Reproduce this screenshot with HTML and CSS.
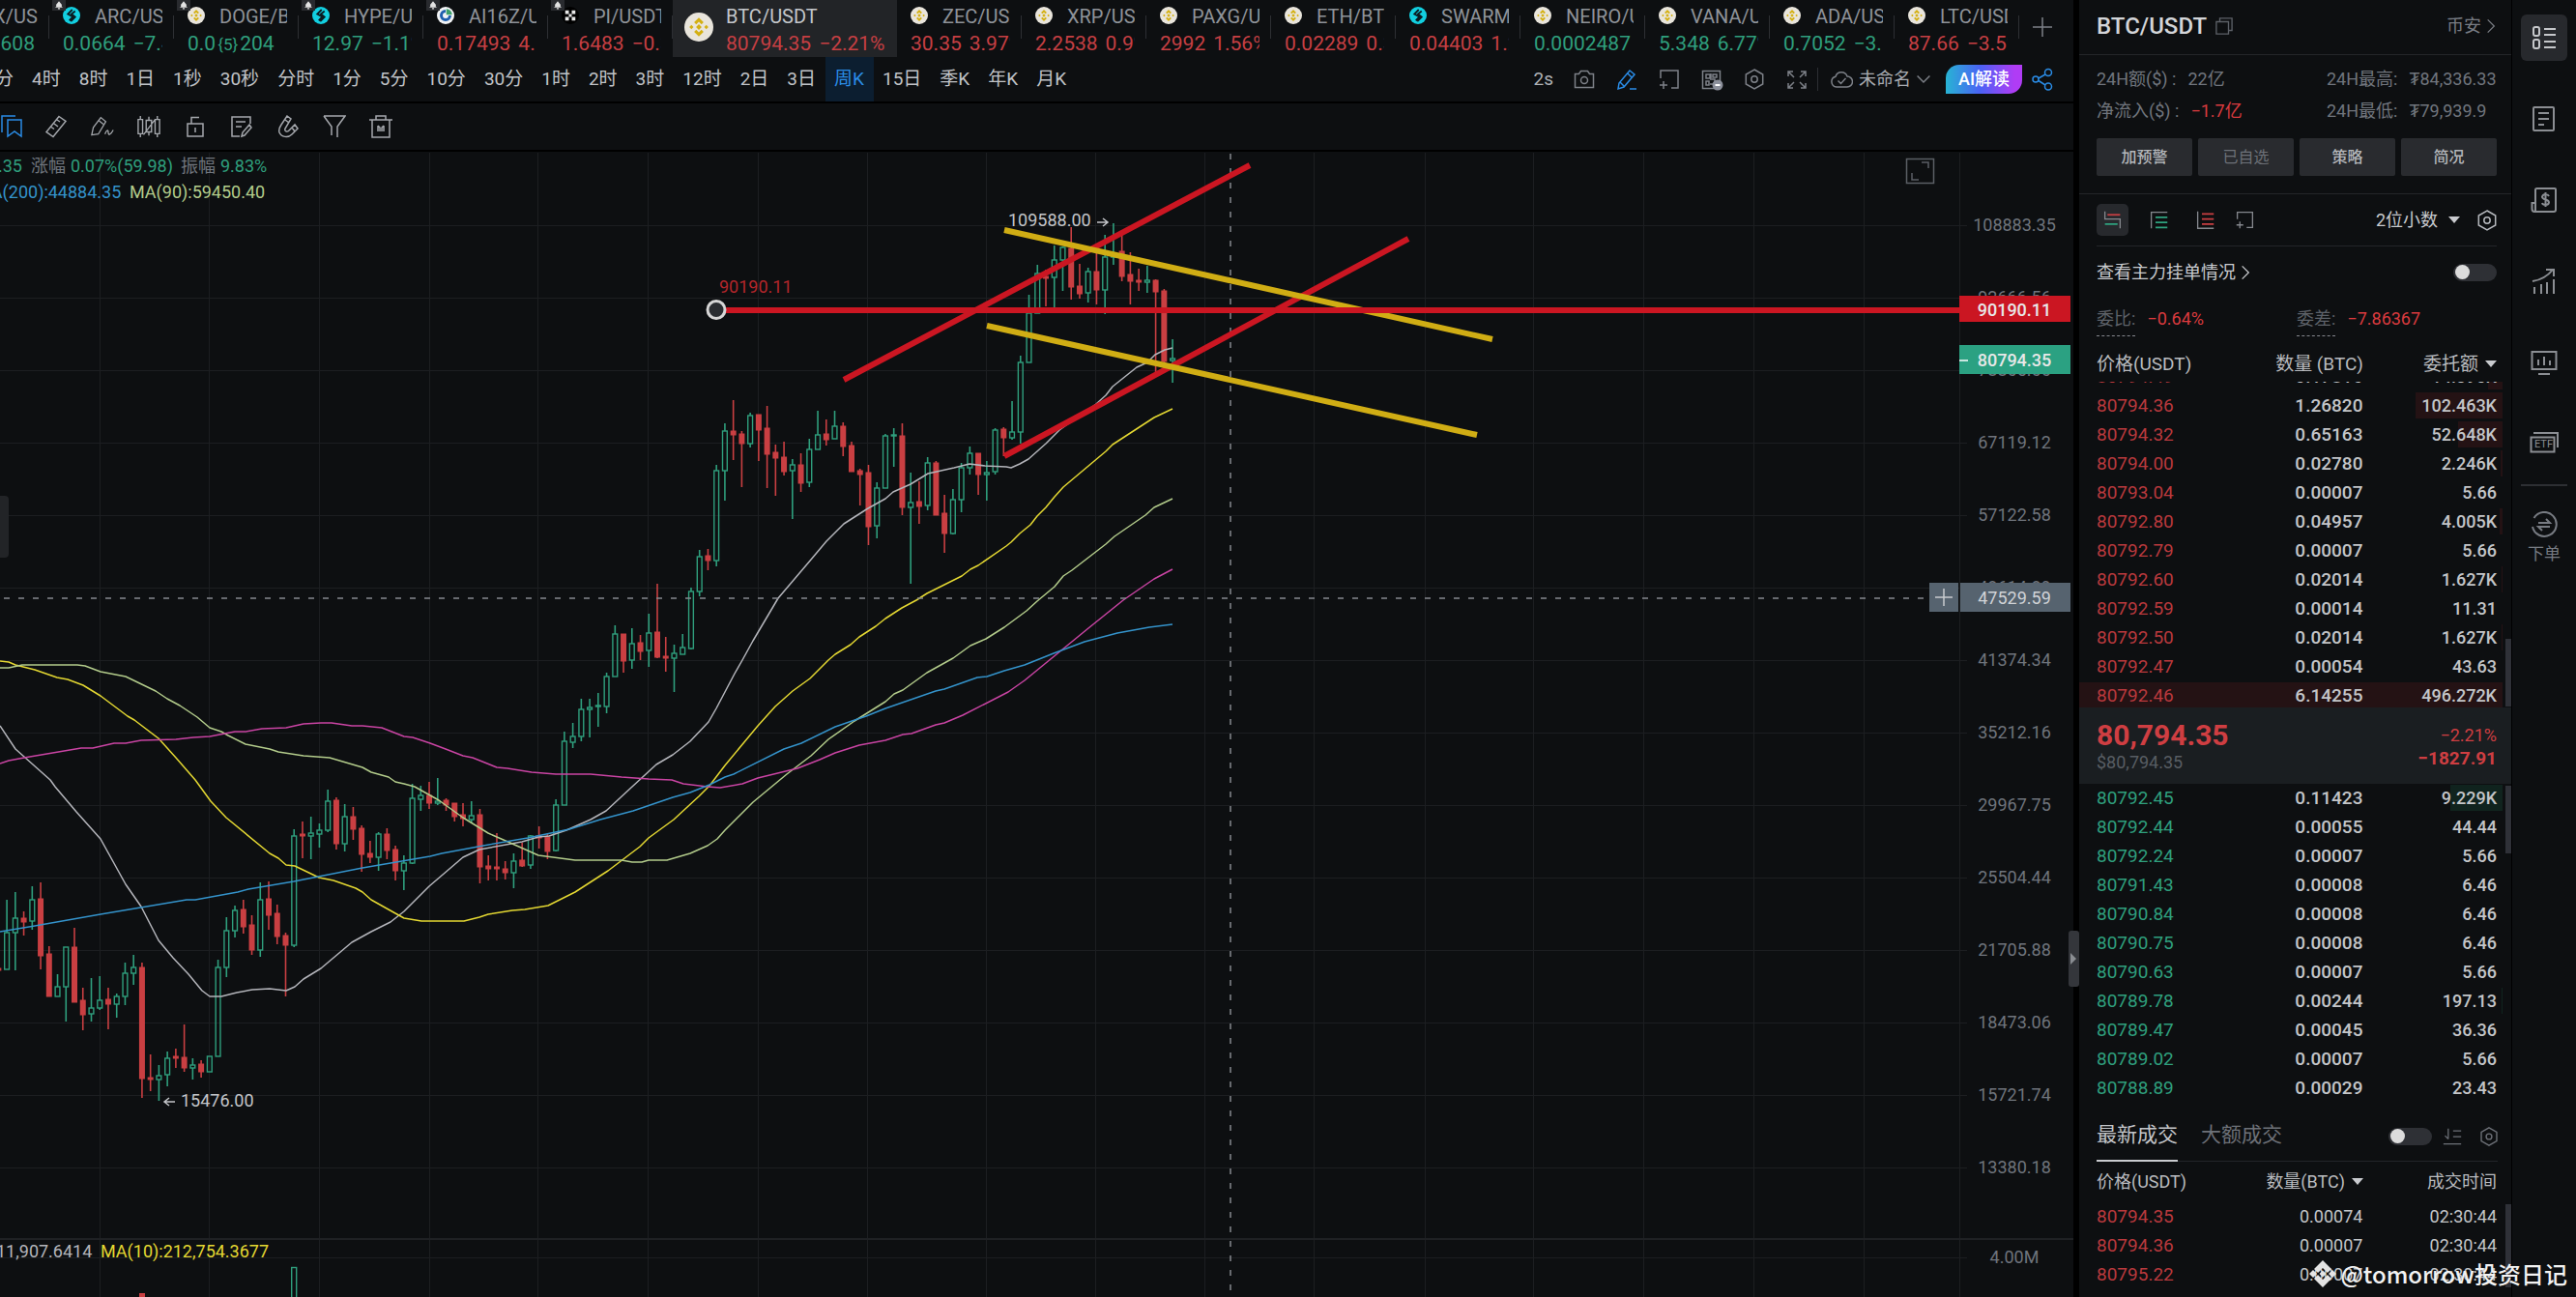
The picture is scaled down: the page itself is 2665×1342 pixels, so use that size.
FILE: index.html
```html
<!DOCTYPE html>
<html lang="zh-CN">
<head>
<meta charset="utf-8">
<title>BTC/USDT 周K</title>
<link rel="stylesheet" href="styles.css">
</head>
<body>
<svg class="sprite" aria-hidden="true">
  <defs>
    <symbol id="binance" viewBox="0 0 24 24"><circle cx="12" cy="12" r="12" fill="#e9e5dc"/><g transform="translate(3 3) scale(.75)" fill="#d4b012"><path d="M12 1.5l5.200 5.200-2.300 2.300L12 6.100 9.100 9 6.800 6.700zM12 22.500l-5.200-5.200 2.300-2.300L12 17.900l2.900-2.900 2.300 2.300zM1.500 12l2.300-2.300L6.100 12l-2.300 2.300zM17.900 12l2.300-2.300 2.300 2.300-2.300 2.300zM12 8.900l3.100 3.100-3.100 3.100L8.900 12z"/></g></symbol>
    <symbol id="bybit" viewBox="0 0 24 24"><circle cx="12" cy="12" r="12" fill="#12cfe0"/><path d="M13 4l-6 6 7 4-5 5M17 6l-5 4 5 4-6 6" fill="none" stroke="#0b1a20" stroke-width="2.400"/></symbol>
    <symbol id="gecko" viewBox="0 0 24 24"><circle cx="12" cy="12" r="12" fill="#f1f3f5"/><path d="M12 4a8 8 0 1 0 8 8h-4a4 4 0 1 1-4-4z" fill="#1d5fae"/><path d="M13 3v8h8a8 8 0 0 0-8-8z" fill="#3aa06a"/></symbol>
    <symbol id="okx" viewBox="0 0 24 24"><circle cx="12" cy="12" r="12" fill="#000"/><path d="M5 5h5v5H5zM14 5h5v5h-5zM10 10h4v4h-4zM5 14h5v5H5zM14 14h5v5h-5z" fill="#e8e8e8"/></symbol>
    <symbol id="bell" viewBox="0 0 14 12"><path d="M7 0l4 5v3l2 1H1l2-1V5zM5.500 10h3v1.500h-3z" fill="#e3e3e3"/></symbol>
    <symbol id="camera" viewBox="0 0 24 24"><path d="M2.500 6.500h4l2-3h7l2 3h4v14h-19z"/><circle cx="12" cy="13" r="3.500"/></symbol>
    <symbol id="pencil" viewBox="0 0 24 24"><path d="M3 22l1-6L15 3l5 4L9 20zM13 6l4 4M15 22h7M5 15l4 4"/></symbol>
    <symbol id="addbox" viewBox="0 0 24 24"><path d="M3 11V3h18v18h-7M2 18h8M6 14v8"/></symbol>
    <symbol id="qr" viewBox="0 0 24 24"><path d="M2.500 3.500h18v18h-18zM6 7h4v4H6zM13 7h4v3h-4zM12 12h3v3M6 14h3v4H6zM10 17h3M11 6v7"/><circle cx="18" cy="18" r="5.500" fill="#8b8f9a" stroke="none"/><path d="M15.500 18h5" stroke="#fff" stroke-width="2"/></symbol>
    <symbol id="hex" viewBox="0 0 24 24"><path d="M12 2l8.700 5v10L12 22l-8.700-5V7z"/><circle cx="12" cy="12" r="3.200"/></symbol>
    <symbol id="expand" viewBox="0 0 24 24"><path d="M3 9V4h5M3 4l6 6M16 4h5v5M21 4l-6 6M3 16v5h5M3 21l6-6M21 16v5h-5M21 21l-6-6"/></symbol>
    <symbol id="cloud" viewBox="0 0 24 24"><path d="M7 20a5.500 5.500 0 0 1-1-10.800A6.300 6.300 0 0 1 18 9a5.500 5.500 0 0 1 0 11zM8.500 13.500l3 3 5-5.500"/></symbol>
    <symbol id="chev-d" viewBox="0 0 24 24"><path d="M1 6l11 11L23 6" stroke-width="2.500"/></symbol>
    <symbol id="chev-r" viewBox="0 0 12 24"><path d="M2 4l8 8-8 8"/></symbol>
    <symbol id="share" viewBox="0 0 24 24"><circle cx="5" cy="12" r="3"/><circle cx="18" cy="5" r="3.500"/><circle cx="18" cy="19.500" r="3.500"/><path d="M8 11l7-4M8 13.500l7 4.500"/></symbol>
    <symbol id="marks" viewBox="0 0 24 24"><path d="M8 5h14v17l-7-5-7 5zM2 18V1h14"/></symbol>
    <symbol id="ruler" viewBox="0 0 24 24"><path d="M15 1.500l7 5L9 22.500l-7-5zM13 5l3 2M10 9l4 3M7 12.500l3 2"/></symbol>
    <symbol id="brush" viewBox="0 0 28 24"><path d="M1 22l2-9L12 1l6 5-9 15zM10 5l5 4M9 21l-8 1M17 21c2-5 4-6 4-2s3 3 6-3"/></symbol>
    <symbol id="candles" viewBox="0 0 26 24"><path d="M1 4h5v16H1zM10 5h6v13h-6zM20 4h5v16h-5zM3.500 0v4M3.500 20v4M13 1v4M13 18v4M22.500 0v4M22.500 20v4M7 21L20 4"/></symbol>
    <symbol id="lock" viewBox="0 0 24 24"><path d="M4 9h16v13H4zM8 9V2.500h8M12 13v5"/></symbol>
    <symbol id="note" viewBox="0 0 24 24"><path d="M10 22H2V2h19v7M6 7h10M6 12h6M12 22l1-4 7-8 2 3-7 8z"/></symbol>
    <symbol id="magnet" viewBox="0 0 24 24"><path d="M11 1l4 3-6 10c-1 3 2 4 4 2l6-6 3 4-6 6c-4 4-11 3-13-2-1-3 0-5 2-8zM9 5l4 3M16 13l3 4"/></symbol>
    <symbol id="funnel" viewBox="0 0 24 24"><path d="M1 1h22l-8 11v11M1 1l8 11v9"/></symbol>
    <symbol id="trash" viewBox="0 0 24 24"><path d="M0 5h24M7 5V1h10v4M3 5v18h18V5M9 11l2 2v4M15 11l-2 2v4M9 17v-6M15 17v-6"/></symbol>
    <symbol id="copy" viewBox="0 0 20 20"><path d="M1 5h14v14H1zM5 5V1h14v14h-4"/></symbol>
    <symbol id="both" viewBox="0 0 24 24"><path d="M3 2v9h18v11"/><path d="M6 6h15" stroke="#c93f42" stroke-width="2"/><path d="M3 17h15" stroke="#2fa27f" stroke-width="2"/></symbol>
    <symbol id="bids" viewBox="0 0 24 24"><path d="M3 22V3h19"/><path d="M8 9h14M8 15h14M8 21h14" stroke="#2fa27f" stroke-width="2"/></symbol>
    <symbol id="asks" viewBox="0 0 24 24"><path d="M3 2v20h19"/><path d="M8 5h14M8 11h14M8 17h14" stroke="#c93f42" stroke-width="2"/></symbol>
    <symbol id="sort" viewBox="0 0 24 24"><path d="M7 2v13M3 11l4 4M13 5h10M13 12h10M1 21h22"/></symbol>
    <symbol id="r-list" viewBox="0 0 28 28"><rect x="3" y="3" width="6" height="9" rx="2"/><rect x="3" y="16" width="6" height="9" rx="2"/><path d="M14 5h12M14 11h12M14 18h12M14 24h12"/></symbol>
    <symbol id="r-doc" viewBox="0 0 28 28"><rect x="3" y="2" width="21" height="24" rx="1"/><path d="M8 8h11M8 14h11M8 20h6"/></symbol>
    <symbol id="r-money" viewBox="0 0 28 28"><path d="M5 25V3.500Q5 2 6.500 2H25q1 0 1 1v21q0 2-2 2H4q-2.500 0-2.500-3v-6H5M19 10q-1-2-3.500-2T12 10.500q0 2 3.500 3t3.500 3Q18.500 19 15.500 19T12 17M15.500 6v15"/></symbol>
    <symbol id="r-trend" viewBox="0 0 28 28"><path d="M2 14Q15 12 23 2M16 2h8v7M4 20v7M11 17v10M17 15v12M24 12v15"/></symbol>
    <symbol id="r-screen" viewBox="0 0 28 28"><path d="M1.500 3h25v18h-25zM8 26h12M8 11v6M14 8v9M20 12v5"/></symbol>
    <symbol id="r-etf" viewBox="0 0 30 28"><path d="M1.500 7.500h24v15h-24zM4 3h25v15"/></symbol>
    <symbol id="r-swap" viewBox="0 0 28 28"><path d="M3.500 7A12.500 12.500 0 1 1 2 16M8 12h12l-4-4M20 16H8l4 4"/></symbol>
  </defs>
</svg>

<div class="app">
  <main class="main">
    <div class="tabs">
      <nav class="tab-list" id="tabs" aria-label="自选"></nav>
      <button class="icon-btn add-tab" aria-label="添加"><svg viewBox="0 0 24 24"><path d="M12 2v20M2 12h20"/></svg></button>
    </div>

    <div class="bar periods">
      <nav class="period-list">
        <button>分</button><button>4时</button><button>8时</button><button>1日</button><button>1秒</button><button>30秒</button><button>分时</button><button>1分</button><button>5分</button><button>10分</button><button>30分</button><button>1时</button><button>2时</button><button>3时</button><button>12时</button><button>2日</button><button>3日</button><button class="on">周K</button><button>15日</button><button>季K</button><button>年K</button><button>月K</button>
      </nav>
      <div class="tools">
        <span class="refresh">2s</span>
        <button class="icon-btn" aria-label="截图"><svg><use href="#camera"/></svg></button>
        <button class="icon-btn blue" aria-label="画线"><svg><use href="#pencil"/></svg></button>
        <button class="icon-btn" aria-label="添加窗口"><svg><use href="#addbox"/></svg></button>
        <button class="icon-btn" aria-label="二维码"><svg><use href="#qr"/></svg></button>
        <button class="icon-btn" aria-label="设置"><svg><use href="#hex"/></svg></button>
        <button class="icon-btn" aria-label="全屏"><svg><use href="#expand"/></svg></button>
      </div>
      <button class="layout-btn"><svg class="i24"><use href="#cloud"/></svg>未命名<svg class="i14"><use href="#chev-d"/></svg></button>
      <button class="ai">AI解读</button>
      <button class="icon-btn blue" aria-label="分享"><svg><use href="#share"/></svg></button>
    </div>

    <div class="bar draw">
      <button class="icon-btn blue" aria-label="收藏"><svg><use href="#marks"/></svg></button>
      <button class="icon-btn" aria-label="尺子"><svg><use href="#ruler"/></svg></button>
      <button class="icon-btn" aria-label="画笔"><svg><use href="#brush"/></svg></button>
      <button class="icon-btn" aria-label="形态"><svg><use href="#candles"/></svg></button>
      <button class="icon-btn" aria-label="锁定"><svg><use href="#lock"/></svg></button>
      <button class="icon-btn" aria-label="备注"><svg><use href="#note"/></svg></button>
      <button class="icon-btn" aria-label="磁吸"><svg><use href="#magnet"/></svg></button>
      <button class="icon-btn" aria-label="筛选"><svg><use href="#funnel"/></svg></button>
      <button class="icon-btn" aria-label="删除"><svg><use href="#trash"/></svg></button>
    </div>

    <div class="plot">
      <svg id="chart" class="chart" viewBox="0 157 2145 1185" preserveAspectRatio="xMaxYMin slice" role="img" aria-label="BTC/USDT 周K线图"></svg>
      <button class="handle-left" aria-label="展开"></button>
      <button class="handle-right" aria-label="收起"></button>
    </div>
  </main>

  <aside class="panel">
    <header class="head">
      <h1>BTC/USDT</h1><svg class="i18"><use href="#copy"/></svg>
      <a href="#exchange" class="exchange">币安<svg class="chev"><use href="#chev-r"/></svg></a>
    </header>

    <section class="stats">
      <dl>
        <div><dt>24H额($)&nbsp;:</dt><dd>22亿</dd></div>
        <div><dt>24H最高:</dt><dd>₮84,336.33</dd></div>
        <div><dt>净流入($)&nbsp;:</dt><dd class="hot">−1.7亿</dd></div>
        <div><dt>24H最低:</dt><dd>₮79,939.9</dd></div>
      </dl>
      <div class="actions"><button>加预警</button><button class="dim">已自选</button><button>策略</button><button>简况</button></div>
    </section>

    <section class="book">
      <div class="book-tools">
        <button class="mode on" aria-label="买卖盘"><svg><use href="#both"/></svg></button>
        <button class="mode" aria-label="买盘"><svg><use href="#bids"/></svg></button>
        <button class="mode" aria-label="卖盘"><svg><use href="#asks"/></svg></button>
        <button class="mode last" aria-label="添加"><svg><use href="#addbox"/></svg></button>
        <label class="digits"><select aria-label="小数位"><option>2位小数</option></select></label>
        <button class="mode gear" aria-label="设置"><svg><use href="#hex"/></svg></button>
      </div>
      <div class="whale">
        <a href="#whale">查看主力挂单情况<svg class="chev"><use href="#chev-r"/></svg></a>
        <input class="switch" type="checkbox" aria-label="主力挂单">
      </div>
      <dl class="ratio">
        <div><dt>委比:</dt><dd>−0.64%</dd></div>
        <div><dt>委差:</dt><dd>−7.86367</dd></div>
      </dl>
      <div class="cols big"><span>价格(USDT)</span><span>数量 (BTC)</span><button>委托额<i class="tri"></i></button></div>
      <div class="side ask-side"><table id="asks-table" class="orders ask" aria-label="卖盘"></table><i class="thumb"></i></div>
      <div class="last-price">
        <div><strong>80,794.35</strong><small>$80,794.35</small></div>
        <div class="chg"><span>−2.21%</span><b>−1827.91</b></div>
      </div>
      <div class="side bid-side"><table id="bids-table" class="orders bid" aria-label="买盘"></table><i class="thumb"></i></div>
    </section>

    <section class="trades">
      <div class="trade-tabs">
        <button class="on">最新成交</button><button>大额成交</button>
        <input class="switch" type="checkbox" aria-label="成交提醒">
        <svg class="i20"><use href="#sort"/></svg><svg class="i22"><use href="#hex"/></svg>
      </div>
      <div class="cols"><span>价格(USDT)</span><button>数量(BTC)<i class="tri"></i></button><span>成交时间</span></div>
      <div class="side trade-side"><table id="trades-table" class="orders ask small" aria-label="最新成交"></table><i class="thumb"></i></div>
    </section>
  </aside>

  <nav class="rail" aria-label="侧栏">
    <button class="on" aria-label="行情"><svg><use href="#r-list"/></svg></button>
    <button aria-label="资讯"><svg><use href="#r-doc"/></svg></button>
    <button aria-label="资金"><svg><use href="#r-money"/></svg></button>
    <button aria-label="趋势"><svg><use href="#r-trend"/></svg></button>
    <button aria-label="数据"><svg><use href="#r-screen"/></svg></button>
    <button class="etf"><svg><use href="#r-etf"/></svg><span>ETF</span></button>
    <hr>
    <button class="order"><svg><use href="#r-swap"/></svg>下单</button>
  </nav>

  <div class="credit"><svg viewBox="0 0 28 28"><path d="M14 0l9 9-4 4-5-5-5 5-4-4zM14 28l-9-9 4-4 5 5 5-5 4 4zM0 14l4-4 4 4-4 4zM20 14l4-4 4 4-4 4zM14 10.500l3.500 3.500-3.500 3.500-3.500-3.500z"/></svg>@tomorrow投资日记</div>
</div>
<script src="app.js"></script>
</body>
</html>
```
FILE: styles.css
```css
* { box-sizing: border-box; }
:root {
  --bg: #0d0f11;
  --line: #232529;
  --text: #c9cbcf;
  --muted: #70757d;
  --red: #c63f43;
  --green: #2f9f7d;
  --blue: #2a8ce6;
}
html, body { height: 100%; }
body {
  margin: 0;
  overflow: hidden;
  background: #000;
  color: var(--text);
  font: 18px/24px Roboto, "Noto Sans CJK SC", sans-serif;
}
button, select, input { font: inherit; color: inherit; margin: 0; }
button { padding: 0; border: 0; background: none; white-space: nowrap; }
a { color: inherit; text-decoration: none; }
dl, dd, h1 { margin: 0; }
svg { display: block; fill: none; stroke: currentColor; stroke-width: 1.5; }
.sprite { position: absolute; width: 0; height: 0; }
.i24 { width: 24px; height: 24px; }
.i22 { width: 22px; height: 22px; }
.i20 { width: 20px; height: 20px; }
.i18 { width: 18px; height: 18px; }
.i14 { width: 14px; height: 14px; }
.chev { width: 10px; height: 20px; }

.app {
  display: grid;
  grid-template-columns: minmax(0, 1fr) 453px 67px;
  height: 100vh;
  position: relative;
}
.main { display: flex; flex-direction: column; min-width: 0; background: var(--bg); }

/* symbol tabs */
.tabs { display: flex; height: 59px; overflow: hidden; }
.tab-list { display: flex; margin-left: -78px; }
.tab {
  position: relative;
  display: grid;
  grid-template-columns: 18px minmax(0, 1fr);
  column-gap: 15px;
  align-content: start;
  width: 129px;
  padding: 5px 12px 0 14px;
  text-align: left;
}
.tab::after { content: ""; position: absolute; right: 0; top: 16px; width: 1px; height: 24px; background: #2d2f33; }
.tab svg { stroke: none; }
.tab > svg { width: 18px; height: 18px; margin-top: 2px; }
.tab .bell { position: absolute; left: 3px; top: 0; width: 14px; height: 11px; margin: 0; padding: 0 2px; background: #292b2f; }
.name, .quote { display: block; overflow: hidden; white-space: nowrap; text-overflow: clip; }
.name { font-size: 20px; color: #8f9399; }
.quote { grid-column: 1 / -1; margin-top: 4px; font-size: 21px; color: var(--red); }
.quote.up { color: var(--green); }
.quote span { margin-left: 8px; }
.quote small { font-size: 17px; padding: 0 2px; }
.tab.current { grid-template-columns: 30px 1fr; column-gap: 13px; width: 232px; padding-left: 12px; padding-right: 0; background: #222427; }
.tab.current::after { display: none; }
.tab.current > svg { width: 30px; height: 30px; margin-top: 8px; grid-row: 1 / 3; }
.tab.current .quote { grid-column: 2; }
.tab.current .name { color: #c4c7cb; }
.add-tab { margin: 16px 0 0 12px; }

.icon-btn, .icon-btn svg { width: 24px; height: 24px; }
.icon-btn { color: #7d8188; flex: none; }
.blue { color: var(--blue); }

/* toolbars */
.bar { display: flex; align-items: center; border-bottom: 2px solid #000; }
.periods { height: 48px; padding-right: 20px; }
.period-list { display: flex; height: 46px; margin-left: -14px; }
.period-list button { padding: 0 10px 0 9px; font-size: 19px; color: #c0c3c7; }
.period-list .on { background: #0c1e30; color: var(--blue); }
.tools { display: flex; align-items: center; gap: 20px; margin-left: auto; padding-right: 9px; border-right: 1px solid #2d2f33; }
.refresh { font-size: 19px; color: #b0b3b8; }
.layout-btn { display: flex; align-items: center; gap: 6px; padding-left: 12px; color: #a9acb2; }
.layout-btn svg { color: #7d8188; }
.ai {
  width: 79px; height: 30px; margin: 0 9px 0 16px;
  border-radius: 14px 0 14px 0;
  background: linear-gradient(90deg, #27b4d4, #4b62f5 45%, #b03cf5 90%);
  color: #fff; font-weight: 500;
}
.draw { height: 50px; }
.draw .icon-btn { width: 48px; color: #a5a8ad; }
.draw .icon-btn svg { margin: 0 auto; }
.draw .icon-btn.blue { width: 34px; color: var(--blue); }
.draw .icon-btn.blue svg { margin: 0; }

/* chart */
.plot { position: relative; flex: 1; min-height: 0; }
.chart { width: 100%; height: 100%; stroke: none; }
.chart text { font-size: 18px; fill: #c3c5c9; }
.chart .axis { fill: #6f747c; text-anchor: middle; }
.chart .tag { text-anchor: middle; fill: #e8e8e8; font-weight: 500; }
.chart .cursor-tag { text-anchor: middle; fill: #d0d3d7; }
.handle-left { position: absolute; left: 0; top: 356px; width: 9px; height: 64px; border-radius: 0 4px 4px 0; background: #222427; }
.handle-right { position: absolute; right: -6px; top: 806px; width: 11px; height: 58px; border-radius: 3px; background: #34363b; z-index: 2; }
.handle-right::after { content: ""; position: absolute; left: 2px; top: 23px; border: 6px solid transparent; border-left-color: #8a8d92; border-right: 0; }

/* quote panel */
.panel { display: flex; flex-direction: column; min-height: 0; margin-left: 6px; background: var(--bg); }
.head { display: flex; align-items: center; gap: 9px; height: 57px; padding: 0 16px 2px 18px; border-bottom: 1px solid var(--line); color: #5c6067; }
.head h1 { font-size: 24px; font-weight: 500; color: #d3d5d8; }
.exchange { display: flex; align-items: center; gap: 5px; margin-left: auto; color: #787c83; }
.stats { padding: 13px 15px 18px 18px; border-bottom: 1px solid var(--line); color: var(--muted); }
.stats dl { display: grid; grid-template-columns: 238px 1fr; row-gap: 9px; }
.stats dl div { display: flex; gap: 12px; white-space: nowrap; }
.stats .hot { color: #d93a3e; }
.actions { display: grid; grid-template-columns: repeat(4, 1fr); gap: 6px; margin-top: 16px; }
.actions button { height: 39px; border-radius: 2px; background: #292b2f; font-size: 16px; font-weight: 500; color: #b4b7bb; }
.actions .dim { color: #6d7178; font-weight: 400; }

.book { display: flex; flex-direction: column; }
.book-tools { display: flex; align-items: center; height: 54px; margin: 0 15px 0 18px; border-bottom: 1px solid var(--line); }
.mode { display: grid; place-items: center; width: 33px; height: 33px; margin-right: 15px; border-radius: 5px; color: #85888e; }
.mode svg { width: 21px; height: 21px; }
.mode.on { background: #27292d; }
.mode.last { margin-left: -7px; margin-right: 0; }
.mode.gear { width: 22px; margin: 0 0 0 16px; color: #b5b8bd; }
.mode.gear svg { width: 24px; height: 24px; }
.digits { display: flex; align-items: center; gap: 10px; margin-left: auto; }
.digits select { appearance: none; border: 0; padding: 0; background: none; }
.digits::after, .tri { content: ""; display: inline-block; border: 6px solid transparent; border-top: 7px solid #c9cbcf; border-bottom: 0; }
.whale { display: flex; align-items: center; justify-content: space-between; height: 54px; padding: 0 15px 0 18px; }
.whale a { display: flex; align-items: center; gap: 5px; }
.switch { appearance: none; position: relative; width: 45px; height: 18px; border-radius: 9px; background: #2e3035; }
.switch::after { content: ""; position: absolute; left: 2px; top: 1px; width: 15px; height: 15px; border-radius: 50%; background: #dcdcdc; }
.ratio { display: grid; grid-template-columns: 207px 1fr; height: 49px; padding: 9px 15px 0 18px; }
.ratio div { display: flex; align-items: flex-start; gap: 12px; }
.ratio dt { color: #5d6168; padding-bottom: 5px; border-bottom: 1px dashed #85888e; }
.ratio dd { color: #d93a3e; }
.cols { display: grid; grid-template-columns: 150px 144px 138px; height: 42px; align-items: center; padding-right: 15px; color: #b9bbbf; }
.cols > :first-child { padding-left: 18px; white-space: nowrap; }
.cols > :nth-child(n+2) { text-align: right; }
.cols .tri { margin-left: 7px; vertical-align: 3px; }
.cols.big { height: 37px; font-size: 19px; }
.side { position: relative; overflow: hidden; }
.ask-side { display: flex; flex-direction: column; justify-content: flex-end; height: 337px; }
.ask-side table { margin-bottom: -3px; }
.thumb { position: absolute; right: 0; top: 2px; width: 6px; height: 70px; background: #2f3138; }
.ask-side .thumb { top: auto; bottom: 1px; }
.orders { width: 438px; flex: none; border-collapse: collapse; table-layout: fixed; font-weight: 500; font-size: 19px; color: #c3c5c8; }
.orders tr { position: relative; height: 30px; }
.orders td { position: relative; padding: 0; text-align: right; line-height: 30px; }
.orders td:nth-child(1) { width: 34%; padding-left: 18px; text-align: left; font-weight: 400; }
.orders td:nth-child(2) { width: 33%; }
.orders td:nth-child(3) { width: 33%; padding-right: 6px; font-size: 18px; }
.ask td:first-child { color: #b9393d; }
.bid td:first-child { color: var(--green); }
.depth { position: absolute; right: 0; top: 1px; height: 27px; }
.depth.wide { right: auto; left: 0; }
.ask .depth { background: #241214; }
.bid .depth { background: #10231e; }
.orders td span { position: relative; }
.small td:nth-child(n+2) { font-size: 18px; font-weight: 400; }
.last-price { display: flex; justify-content: space-between; align-items: center; height: 79px; padding: 2px 15px 0 18px; background: #1a1e21; color: #cf3e42; }
.last-price strong, .last-price small, .last-price span, .last-price b { display: block; }
.last-price strong { font-size: 30px; line-height: 32px; }
.last-price small { font-size: 18px; color: #585d63; }
.chg { text-align: right; }
.chg b { font-size: 19px; }
.bid-side { height: 330px; }
.trades { display: flex; flex-direction: column; flex: 1; min-height: 0; }
.trade-tabs { display: flex; align-items: center; height: 61px; margin: 0 14px 0 18px; border-bottom: 1px solid var(--line); color: #6d7178; }
.trade-tabs button { height: 61px; margin-right: 24px; padding-top: 7px; font-size: 21px; border-bottom: 2px solid transparent; }
.trade-tabs .on { border-color: #c9cbcf; color: #c4c6ca; }
.trade-tabs .switch { margin: 10px 11px 0 auto; }
.trade-tabs svg { margin-top: 10px; }
.trade-tabs .i22 { margin: 10px -2px 0 17px; }
.trade-side { flex: 1; min-height: 0; }
.trade-side .thumb { height: 86px; }

/* rail */
.rail { display: flex; flex-direction: column; align-items: center; gap: 36px; margin-left: 1px; padding-top: 15px; background: var(--bg); color: #8b8e93; }
.rail button { position: relative; display: grid; place-items: center; flex: none; width: 48px; height: 48px; border-radius: 6px; }
.rail svg { width: 28px; height: 28px; stroke-width: 2; }
.rail .on { background: #27292d; color: #c5c7ca; }
.rail .etf svg { width: 30px; }
.etf span { position: absolute; left: 10px; top: 15px; width: 27px; font-size: 11px; line-height: 20px; text-align: center; }
.rail hr { width: 48px; height: 2px; margin: -18px 0 -10px; border: 0; background: #2d2f33; }
.rail .order { height: auto; gap: 4px; font-size: 17px; color: #777b82; }

.credit {
  position: absolute; right: 9px; bottom: 8px;
  display: flex; align-items: center; gap: 5px;
  font: 500 24px/32px "Noto Sans CJK SC", sans-serif; color: #f2f2f2;
}
.credit svg { width: 28px; height: 28px; fill: #e4e4e4; stroke: none; }
```
FILE: app.js
```js
// ---- symbol tabs: exchange, name, price, change, direction, alert ----
const tabs = [
  ['binance', 'TRX/USDT', '0.0001608', '', 1, 0],
  ['bybit', 'ARC/USDT', '0.0664', '−7.4%', 1, 1],
  ['binance', 'DOGE/BTC', '0.0<small>{5}</small>204', '', 1, 1],
  ['bybit', 'HYPE/USDT', '12.97', '−1.1%', 1, 1],
  ['gecko', 'AI16Z/USDT', '0.17493', '4.1%', 0, 1],
  ['okx', 'PI/USDT', '1.6483', '−0.3%', 0, 1],
  ['binance', 'BTC/USDT', '80794.35', '−2.21%', 0, 0],
  ['binance', 'ZEC/USDT', '30.35', '3.97%', 0, 0],
  ['binance', 'XRP/USDT', '2.2538', '0.9%', 0, 0],
  ['binance', 'PAXG/USDT', '2992', '1.56%', 0, 0],
  ['binance', 'ETH/BTC', '0.02289', '0.3%', 0, 0],
  ['bybit', 'SWARMS', '0.04403', '1.2%', 0, 0],
  ['binance', 'NEIRO/USDT', '0.0002487', '', 1, 0],
  ['binance', 'VANA/USDT', '5.348', '6.77%', 1, 0],
  ['binance', 'ADA/USDT', '0.7052', '−3.1%', 1, 0],
  ['binance', 'LTC/USDT', '87.66', '−3.5%', 0, 0],
];
document.getElementById('tabs').innerHTML = tabs.map(([icon, name, price, chg, up, bell]) =>
  `<button class="tab${name === 'BTC/USDT' ? ' current' : ''}">${bell ? '<svg class="bell"><use href="#bell"/></svg>' : ''}` +
  `<svg><use href="#${icon}"/></svg><span class="name">${name}</span>` +
  `<span class="quote${up ? ' up' : ''}">${price}${chg ? `<span>${chg}</span>` : ''}</span></button>`).join('');

// ---- order book and trades: price, amount, total, depth width ----
const asks = [
  ['80794.49', '0.17816', '14.395K', 15], ['80794.36', '1.26820', '102.463K', 90], ['80794.32', '0.65163', '52.648K', 46],
  ['80794.00', '0.02780', '2.246K', 2], ['80793.04', '0.00007', '5.66', 0], ['80792.80', '0.04957', '4.005K', 3],
  ['80792.79', '0.00007', '5.66', 0], ['80792.60', '0.02014', '1.627K', 1], ['80792.59', '0.00014', '11.31', 0],
  ['80792.50', '0.02014', '1.627K', 1], ['80792.47', '0.00054', '43.63', 0], ['80792.46', '6.14255', '496.272K', 438],
];
const bids = [
  ['80792.45', '0.11423', '9.229K', 54], ['80792.44', '0.00055', '44.44', 0], ['80792.24', '0.00007', '5.66', 0],
  ['80791.43', '0.00008', '6.46', 0], ['80790.84', '0.00008', '6.46', 0], ['80790.75', '0.00008', '6.46', 0],
  ['80790.63', '0.00007', '5.66', 0], ['80789.78', '0.00244', '197.13', 1], ['80789.47', '0.00045', '36.36', 0],
  ['80789.02', '0.00007', '5.66', 0], ['80788.89', '0.00029', '23.43', 0],
];
const trades = [
  ['80794.35', '0.00074', '02:30:44', 0], ['80794.36', '0.00007', '02:30:44', 0],
  ['80795.22', '0.00007', '02:30:44', 0], ['80795.34', '0.00007', '02:30:44', 0],
];
const fill = (id, rows) => {
  document.getElementById(id).innerHTML = '<tbody>' + rows.map(([p, a, t, w]) =>
    `<tr><td>${w > 100 ? `<i class="depth wide" style="width:${w}px"></i>` : ''}<span>${p}</span></td>` +
    `<td><span>${a}</span></td>` +
    `<td>${w && w <= 100 ? `<i class="depth" style="width:${w}px"></i>` : ''}<span>${t}</span></td></tr>`).join('') + '</tbody>';
};
fill('asks-table', asks);
fill('bids-table', bids);
fill('trades-table', trades);

// ---- chart ----
const GREEN = '#2f9f7d', RED = '#c93f42';
const out = [];
const hline = (x1, x2, y, c, w = 1, extra = '') => out.push(`<line x1="${x1}" x2="${x2}" y1="${y}" y2="${y}" stroke="${c}" stroke-width="${w}" ${extra}/>`);
const vline = (x, y1, y2, c, w = 1, extra = '') => out.push(`<line x1="${x}" x2="${x}" y1="${y1}" y2="${y2}" stroke="${c}" stroke-width="${w}" ${extra}/>`);
const text = (x, y, s, attr = '') => out.push(`<text x="${x}" y="${y}" ${attr}>${s}</text>`);

[103, 216, 330, 444, 556, 670, 784, 897, 1020, 1133, 1246, 1359, 1474, 1586, 1700, 1814, 1928, 2027]
  .forEach(x => vline(x + 0.5, 158, 1342, '#1c1e21'));
const labels = ['108883.35', '92666.56', '78865.66', '67119.12', '57122.58', '48614.89', '41374.34', '35212.16',
  '29967.75', '25504.44', '21705.88', '18473.06', '15721.74', '13380.18'];
labels.forEach((s, i) => { const y = 233 + 75 * i; hline(0, 2035, y + 0.5, '#1c1e21'); text(2084, y + 6, s, 'class="axis"'); });
hline(0, 2145, 1282, '#1f2124', 2);
hline(0, 2035, 1301.5, '#1c1e21');
text(2084, 1307, '4.00M', 'class="axis"');

// each candle: direction, high, body top, body bottom, low
const candles = `r 1002 1002 1004 1004
g 931 965 1003 1003|g 923 950 965 1004|r 943 950 954 968|g 917 931 953 962|r 913 930 989 1003|r 979 987 1031 1031
g 1008 1021 1031 1031|g 980 980 1021 1057|r 960 980 1037 1037|r 1022 1035 1050 1066|g 1012 1043 1049 1057|g 1010 1035 1043 1045
r 1022 1034 1039 1065|g 1028 1031 1039 1053|g 996 1007 1031 1040|g 988 1001 1007 1019|r 996 1001 1116 1136|r 1091 1115 1117 1129
g 1102 1113 1117 1139|g 1088 1095 1112 1124|r 1085 1093 1095 1105|r 1060 1094 1105 1109|g 1095 1102 1105 1117|r 1097 1101 1109 1115
g 1093 1093 1109 1109|g 993 1001 1093 1093|g 949 963 1001 1011|g 937 942 963 970|r 931 941 959 966|r 947 957 983 988
g 913 931 983 990|r 912 930 947 962|r 936 945 969 977|r 965 968 978 1031|g 858 865 978 980|r 850 863 865 888
g 845 862 865 889|g 852 859 863 877|g 817 829 859 861|r 825 828 873 879|g 832 845 873 881|r 835 845 858 869
r 854 857 884 902|r 870 883 887 893|g 861 863 887 901|r 857 863 880 889|r 875 879 901 911|g 885 893 901 921
g 811 826 893 894|g 813 823 827 839|r 809 823 831 837|g 805 829 831 833|r 826 828 833 839|r 831 831 845 850
r 831 843 847 855|g 829 844 848 852|r 837 843 897 914|r 885 896 899 911|r 862 897 899 911|r 891 899 903 910
g 883 891 903 919|r 872 890 896 897|g 864 865 895 899|r 855 865 866 878|r 863 866 881 889|g 827 833 880 881
g 757 767 833 833|g 748 762 768 774|g 723 734 762 767|g 723 732 734 763|g 717 730 731 752|g 696 700 731 738
g 647 656 700 700|r 656 656 684 696|g 650 666 683 692|r 657 665 674 683|g 635 655 673 690|r 604 654 680 681
r 659 679 681 695|g 667 676 681 716|g 656 670 677 677|g 608 612 671 672|g 569 576 612 617|r 568 575 580 590
g 481 487 580 586|g 438 446 487 518|r 414 446 450 476|r 446 449 459 504|g 427 430 459 463|r 429 429 445 477
r 420 443 470 505|r 460 468 474 513|r 457 473 488 492|g 475 481 487 537|r 469 481 500 509|g 454 465 499 504
g 425 450 465 465|r 434 449 455 461|g 425 441 454 454|r 437 441 462 472|r 457 461 488 488|r 485 487 491 523
r 481 489 545 564|g 499 505 544 557|g 449 451 505 505|g 443 450 451 483|r 438 451 525 533|g 489 520 525 604
r 498 519 524 542|g 473 479 523 528|r 477 479 533 533|r 512 531 552 572|g 506 517 552 553|g 479 484 517 530
g 462 469 484 491|r 469 469 491 512|g 477 489 491 518|g 443 445 488 491|r 442 444 453 472|g 415 447 453 455
g 368 375 447 459|g 305 324 375 375|g 274 283 324 324|r 279 286 287 317|g 254 269 287 319|g 255 256 269 301
r 235 257 297 310|r 273 296 304 309|g 277 281 303 313|r 262 281 300 315|g 243 266 300 325|g 231 265 266 274
r 243 260 286 291|r 261 284 291 315|r 278 290 292 301|g 275 290 292 303|r 289 290 302 385|r 299 301 374 380|g 351 371 373 396`;
candles.split(/[|\n]/).forEach((row, k) => {
  const [dir, ...v] = row.split(' ');
  const [high, top, bottom, low] = v.map(Number);
  const x = 7.1 + 8.739 * (k - 1);
  if (dir === 'r') {
    vline(x, high, low, RED, 1.6);
    out.push(`<rect x="${x - 3}" y="${top - 0.5}" width="6" height="${Math.max(bottom - top, 2) + 1}" fill="${RED}"/>`);
  } else {
    vline(x, high, top, GREEN, 1.6);
    vline(x, bottom, low, GREEN, 1.6);
    out.push(`<rect x="${x - 2.4}" y="${top}" width="4.800" height="${Math.max(bottom - top, 1)}" fill="none" stroke="${GREEN}" stroke-width="1.400"/>`);
  }
});
out.push(`<rect x="301.700" y="1311.500" width="5" height="40" fill="none" stroke="${GREEN}" stroke-width="1.400"/><rect x="144" y="1338" width="6" height="10" fill="${RED}"/>`);

const averages = {
  '#b4b5bb': '0,751 16,775 52,807 57,814 79,840 104,868 130,915 146,938 164,973 179,991 195,1008 209,1025 217,1031 229,1031 245,1027 261,1024 279,1023 296,1025 305,1021 314,1013 332,1002 364,975 384,964 404,954 418,943 444,917 479,887 496,879 540,871 557,866 568,865 586,859 611,848 627,839 654,814 679,791 696,781 714,767 733,747 741,733 760,697 768,683 779,663 805,619 839,579 855,560 873,542 898,526 916,516 924,509 942,501 960,490 987,484 1003,480 1019,482 1041,483 1046,484 1055,480 1064,475 1082,459 1096,445 1134,418 1144,409 1151,400 1176,380 1187,375 1195,367 1205,362 1213,360',
  '#e4d832': '0,684 9,685 16,688 36,693 59,701 70,703 86,709 104,720 132,741 139,745 164,764 182,784 202,807 218,829 234,846 279,883 288,888 296,895 305,896 330,908 345,911 368,919 375,923 384,931 409,945 418,950 436,953 480,953 496,949 505,946 530,942 543,941 567,937 595,923 629,901 662,876 671,867 697,848 723,824 734,813 750,792 784,751 802,731 820,715 838,702 857,683 864,677 880,667 889,659 906,648 916,640 933,629 948,621 959,614 995,596 1004,589 1012,585 1041,565 1046,561 1055,552 1066,543 1073,534 1082,525 1091,514 1100,504 1144,467 1151,460 1194,432 1213,423',
  '#b3cc8b': '0,691 9,691 23,688 80,688 88,689 104,695 130,700 161,715 173,723 186,730 204,742 217,753 229,757 236,761 254,770 279,775 288,778 314,782 341,784 375,794 384,799 402,804 409,809 418,811 429,814 454,828 479,846 505,862 530,873 557,885 595,890 643,890 654,892 664,892 671,890 690,890 714,883 732,875 742,868 750,859 779,830 814,801 839,782 857,765 884,746 916,726 925,718 934,714 959,696 986,681 1004,668 1020,661 1039,649 1062,632 1073,622 1091,607 1100,596 1109,590 1144,563 1153,555 1185,533 1194,525 1213,516',
  '#c944a3': '0,790 9,787 25,784 84,774 96,774 118,769 130,769 146,766 182,765 200,763 217,762 243,757 254,757 271,754 296,753 314,749 332,748 343,748 364,751 375,751 395,753 418,762 427,763 445,769 461,775 479,782 489,784 514,794 525,795 550,799 575,801 611,801 643,804 671,806 695,807 707,811 732,814 745,815 768,811 784,805 825,795 848,786 864,779 889,771 916,766 934,760 943,759 968,750 977,748 996,740 1043,716 1060,704 1126,650 1162,621 1194,599 1213,589',
  '#3493cb': '0,964 36,958 104,946 193,931 202,931 246,923 257,920 304,912 375,898 445,886 457,883 500,875 546,867 589,858 621,848 655,839 696,825 714,820 734,812 750,804 759,801 811,775 829,769 864,752 896,741 916,733 968,715 977,713 1011,701 1021,700 1039,694 1060,688 1090,676 1122,664 1156,655 1189,649 1213,646',
};
for (const [color, pts] of Object.entries(averages)) {
  out.push(`<polyline points="${pts}" fill="none" stroke="${color}" stroke-width="1.500" stroke-linejoin="round"/>`);
}

text(1043, 234, '109588.00');
out.push('<path d="M1135 230h11m-5-4l5 4-5 4M181 1140h-11m5-4l-5 4 5 4" fill="none" stroke="#c3c5c9" stroke-width="1.500"/>');
text(187, 1145, '15476.00');

// crosshair and drawings
vline(1273, 159, 1342, '#85898e', 1.5, 'stroke-dasharray="6 9"');
hline(4, 1995, 619, '#85898e', 1.5, 'stroke-dasharray="6 9"');
[['#cb1622', 873, 393, 1293, 171], ['#cb1622', 1039, 472, 1457, 247], ['#d0ad14', 1039, 238, 1544, 351], ['#d0ad14', 1021, 337, 1528, 450]]
  .forEach(([c, x1, y1, x2, y2]) => out.push(`<line x1="${x1}" y1="${y1}" x2="${x2}" y2="${y2}" stroke="${c}" stroke-width="6"/>`));
hline(741, 2027, 321, '#cb1622', 6);
out.push('<circle cx="741" cy="320.500" r="9" fill="#2a2d31" stroke="#d6d6d6" stroke-width="3"/>');
text(744, 303, '90190.11', 'style="fill:#b3262b"');

// price tags
const tag = (x, y, w, h, c) => out.push(`<rect x="${x}" y="${y}" width="${w}" height="${h}" fill="${c}"/>`);
tag(2027, 306, 115, 27, '#cb1622'); text(2084, 327, '90190.11', 'class="tag"');
tag(2027, 357, 115, 30, '#2ba182'); text(2084, 379, '80794.35', 'class="tag"');
hline(2027, 2036, 373, '#fff', 1.5);
tag(1996, 603, 30, 30, '#56636f'); tag(2028, 603, 114, 30, '#56636f'); text(2084, 625, '47529.59', 'class="cursor-tag"');
out.push('<path d="M2002 618h18M2011 609v18" stroke="#c9ccd0" stroke-width="1.500"/>');
out.push('<path d="M1972.500 164.500h28v25h-28zM1988 168h7v6M1978 179v7h7" fill="none" stroke="#5b5f66" stroke-width="1.500"/>');

// indicator legends
const legend = (y, parts) => parts.forEach(([x, s, c]) => text(x, y, s, `style="fill:${c}"`));
legend(178, [[-2, '.35', GREEN], [32, '涨幅', '#70757d'], [73, '0.07%(59.98)', GREEN], [187, '振幅', '#70757d'], [228, '9.83%', GREEN]]);
legend(205, [[-25, 'MA(200):44884.35', '#3493cb'], [134, 'MA(90):59450.40', '#b3cc8b']]);
legend(1301, [[-4, '11,907.6414', '#b4b5bb'], [104, 'MA(10):212,754.3677', '#e4d832']]);
document.getElementById('chart').innerHTML = out.join('');
```
